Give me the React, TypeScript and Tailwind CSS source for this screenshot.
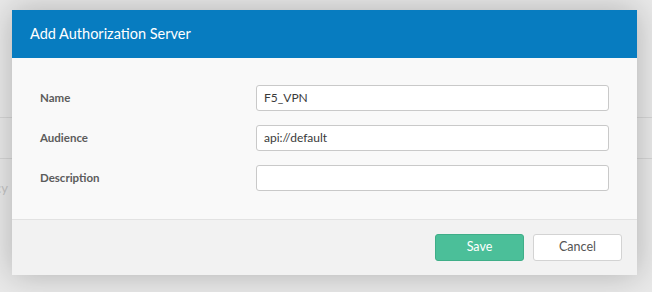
import React from "react";

export default function App() {
  const font = { fontFamily: "Lato, 'Open Sans', 'Liberation Sans', sans-serif" };
  return (
    <div className="relative w-[652px] h-[292px] overflow-hidden bg-[#e9e9e9]" style={font}>
      {/* page behind modal */}
      <div className="pt-[117px]">
        <div className="border-t border-[#d6d6d6]" />
        <div className="h-[40px]" />
        <div className="border-t border-[#d6d6d6]" />
        <div className="relative h-[40px]">
          <span className="absolute right-[644px] top-[20px] text-[13px] text-[#c4c4c4] whitespace-nowrap">Policy</span>
        </div>
      </div>

      {/* modal */}
      <div className="absolute left-[12px] top-[10px] w-[625px] shadow-[0_0_30px_rgba(0,0,0,0.24)]">
        <div className="h-[48px] bg-[#077cc0] flex items-center pl-[18px]">
          <h2 className="text-white text-[14.5px] font-normal">Add Authorization Server</h2>
        </div>
        <div className="bg-[#f9f9f9] pt-[27px] pb-[28px] flex flex-col gap-[14px]">
          {[
            ["Name", "F5_VPN"],
            ["Audience", "api://default"],
            ["Description", ""],
          ].map(([label, value]) => (
            <div key={label} className="flex items-center h-[26px]">
              <label className="w-[244px] pl-[28px] text-[11.5px] font-bold text-[#5c5c5c]">{label}</label>
              <div className="w-[353px] h-[26px] bg-white border border-[#c9c9c9] rounded-[3px] flex items-center px-[7px] text-[12px] text-[#3a3a3a]">
                {value}
              </div>
            </div>
          ))}
        </div>
        <div className="h-[56px] bg-[#f2f2f2] border-t border-[#e2e2e2] flex items-center justify-end pr-[15px] gap-[9px]">
          <button className="w-[89px] h-[27px] rounded-[3px] bg-[#4bbf99] border border-[#3fae88] text-white text-[12.5px]">
            Save
          </button>
          <button className="w-[89px] h-[27px] rounded-[3px] bg-white border border-[#d3d3d3] text-[#555] text-[12.5px]">
            Cancel
          </button>
        </div>
      </div>
    </div>
  );
}
